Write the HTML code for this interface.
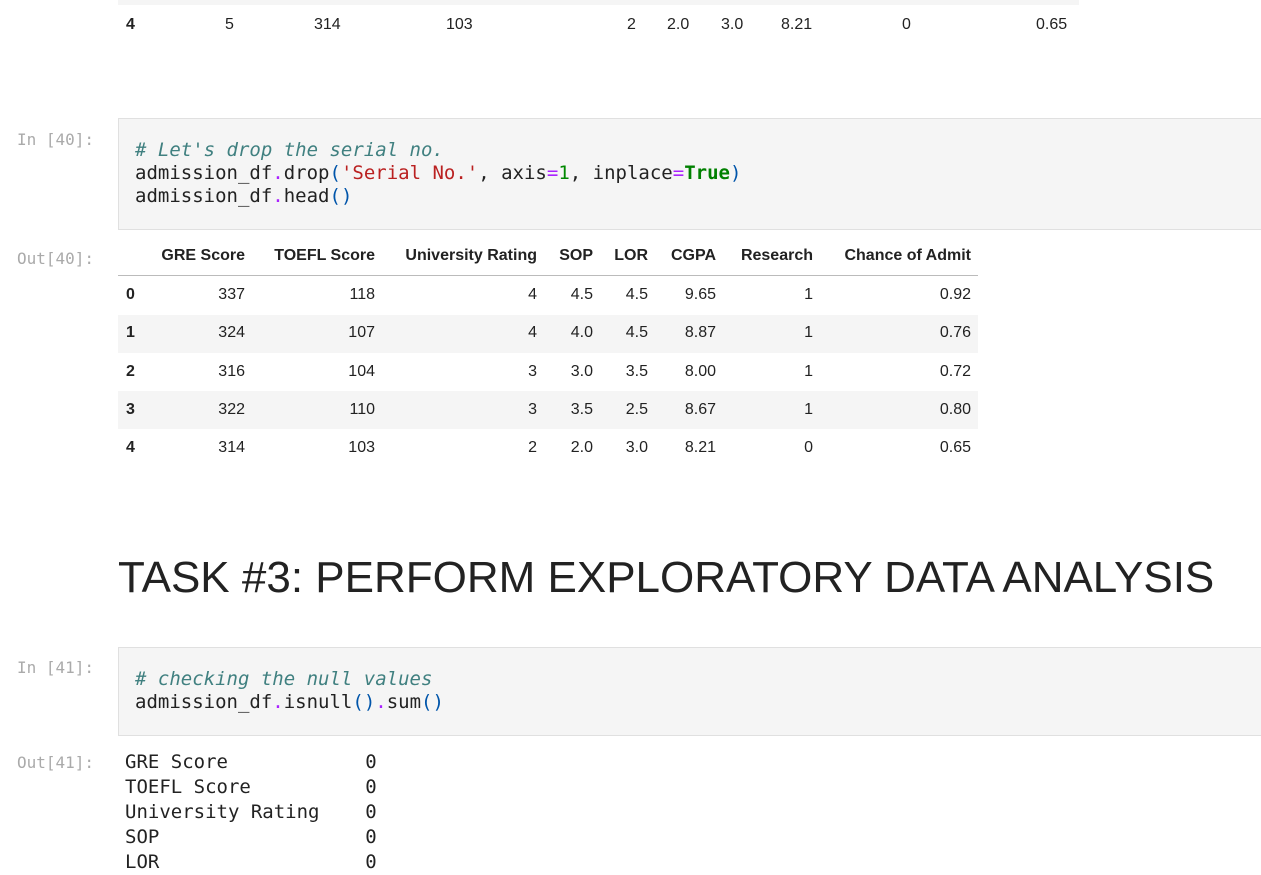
<!DOCTYPE html><html><head><style>
body{margin:0;width:1261px;height:871px;overflow:hidden;background:#fff;font-family:"Liberation Sans",sans-serif;position:relative;color:#000}
.a{position:absolute}
.pr{position:absolute;left:17px;font-family:"DejaVu Sans Mono",monospace;font-size:16px;color:#aaa}
.box{position:absolute;left:118px;right:-2px;background:#f5f5f5;border:1px solid #e0e0e0}
.code{position:absolute;left:16px;font-family:"DejaVu Sans Mono",monospace;font-size:19px;line-height:23px;white-space:pre;color:#222}
.c{color:#408080;font-style:italic}.s{color:#ba2121}.o{color:#aa22ff}.p{color:#0055aa}.n{color:#080}.k{color:#008000;font-weight:bold}
.t{position:absolute;font-size:16px;color:#222}
.r{position:absolute;left:118px;width:860px;height:38px}
.out{position:absolute;left:125px;font-family:"DejaVu Sans Mono",monospace;font-size:19px;line-height:25px;white-space:pre;color:#222}
</style></head><body>
<div class="a" style="left:118px;width:961px;top:0;height:5px;background:#f5f5f5"></div>
<div class="t" style="left:126px;top:16px;font-weight:bold">4</div>
<div class="t" style="left:225px;top:16px">5</div>
<div class="t" style="left:314px;top:16px">314</div>
<div class="t" style="left:446px;top:16px">103</div>
<div class="t" style="left:627px;top:16px">2</div>
<div class="t" style="left:667px;top:16px">2.0</div>
<div class="t" style="left:721px;top:16px">3.0</div>
<div class="t" style="left:781px;top:16px">8.21</div>
<div class="t" style="left:902px;top:16px">0</div>
<div class="t" style="left:1036px;top:16px">0.65</div>

<div class="pr" style="top:130px">In [40]:</div>
<div class="box" style="top:118px;height:110px"><div class="code" style="top:20px"><span class="c"># Let's drop the serial no.</span>
admission_df<span class="o">.</span>drop<span class="p">(</span><span class="s">'Serial No.'</span>, axis<span class="o">=</span><span class="n">1</span>, inplace<span class="o">=</span><span class="k">True</span><span class="p">)</span>
admission_df<span class="o">.</span>head<span class="p">()</span></div></div>

<div class="pr" style="top:249px">Out[40]:</div>
<div class="a" style="left:118px;width:860px;top:275px;height:1px;background:#bbb"></div>
<div class="r" style="top:315px;background:#f5f5f5"></div>
<div class="r" style="top:391px;background:#f5f5f5"></div>
<div id="tbl"></div>
<script>
var cols=[245,375,537,593,648,716,813,971];
var hd=["GRE Score","TOEFL Score","University Rating","SOP","LOR","CGPA","Research","Chance of Admit"];
var rows=[["337","118","4","4.5","4.5","9.65","1","0.92"],["324","107","4","4.0","4.5","8.87","1","0.76"],["316","104","3","3.0","3.5","8.00","1","0.72"],["322","110","3","3.5","2.5","8.67","1","0.80"],["314","103","2","2.0","3.0","8.21","0","0.65"]];
var h="";
hd.forEach(function(t,i){h+='<div class="t" style="right:'+(1261-cols[i])+'px;top:247px;font-weight:bold">'+t+'</div>';});
rows.forEach(function(r,j){var y=286+j*38.3;h+='<div class="t" style="left:126px;top:'+y+'px;font-weight:bold">'+j+'</div>';
r.forEach(function(t,i){h+='<div class="t" style="right:'+(1261-cols[i])+'px;top:'+y+'px">'+t+'</div>';});});
document.getElementById("tbl").innerHTML=h;
</script>

<div class="a" style="left:118px;top:553px;font-size:44px;color:#222;white-space:nowrap">TASK #3: PERFORM EXPLORATORY DATA ANALYSIS</div>

<div class="pr" style="top:658px">In [41]:</div>
<div class="box" style="top:647px;height:87px"><div class="code" style="top:20px"><span class="c"># checking the null values</span>
admission_df<span class="o">.</span>isnull<span class="p">()</span><span class="o">.</span>sum<span class="p">()</span></div></div>

<div class="pr" style="top:753px">Out[41]:</div>
<div class="out" style="top:750px">GRE Score            0
TOEFL Score          0
University Rating    0
SOP                  0
LOR                  0</div>
</body></html>
